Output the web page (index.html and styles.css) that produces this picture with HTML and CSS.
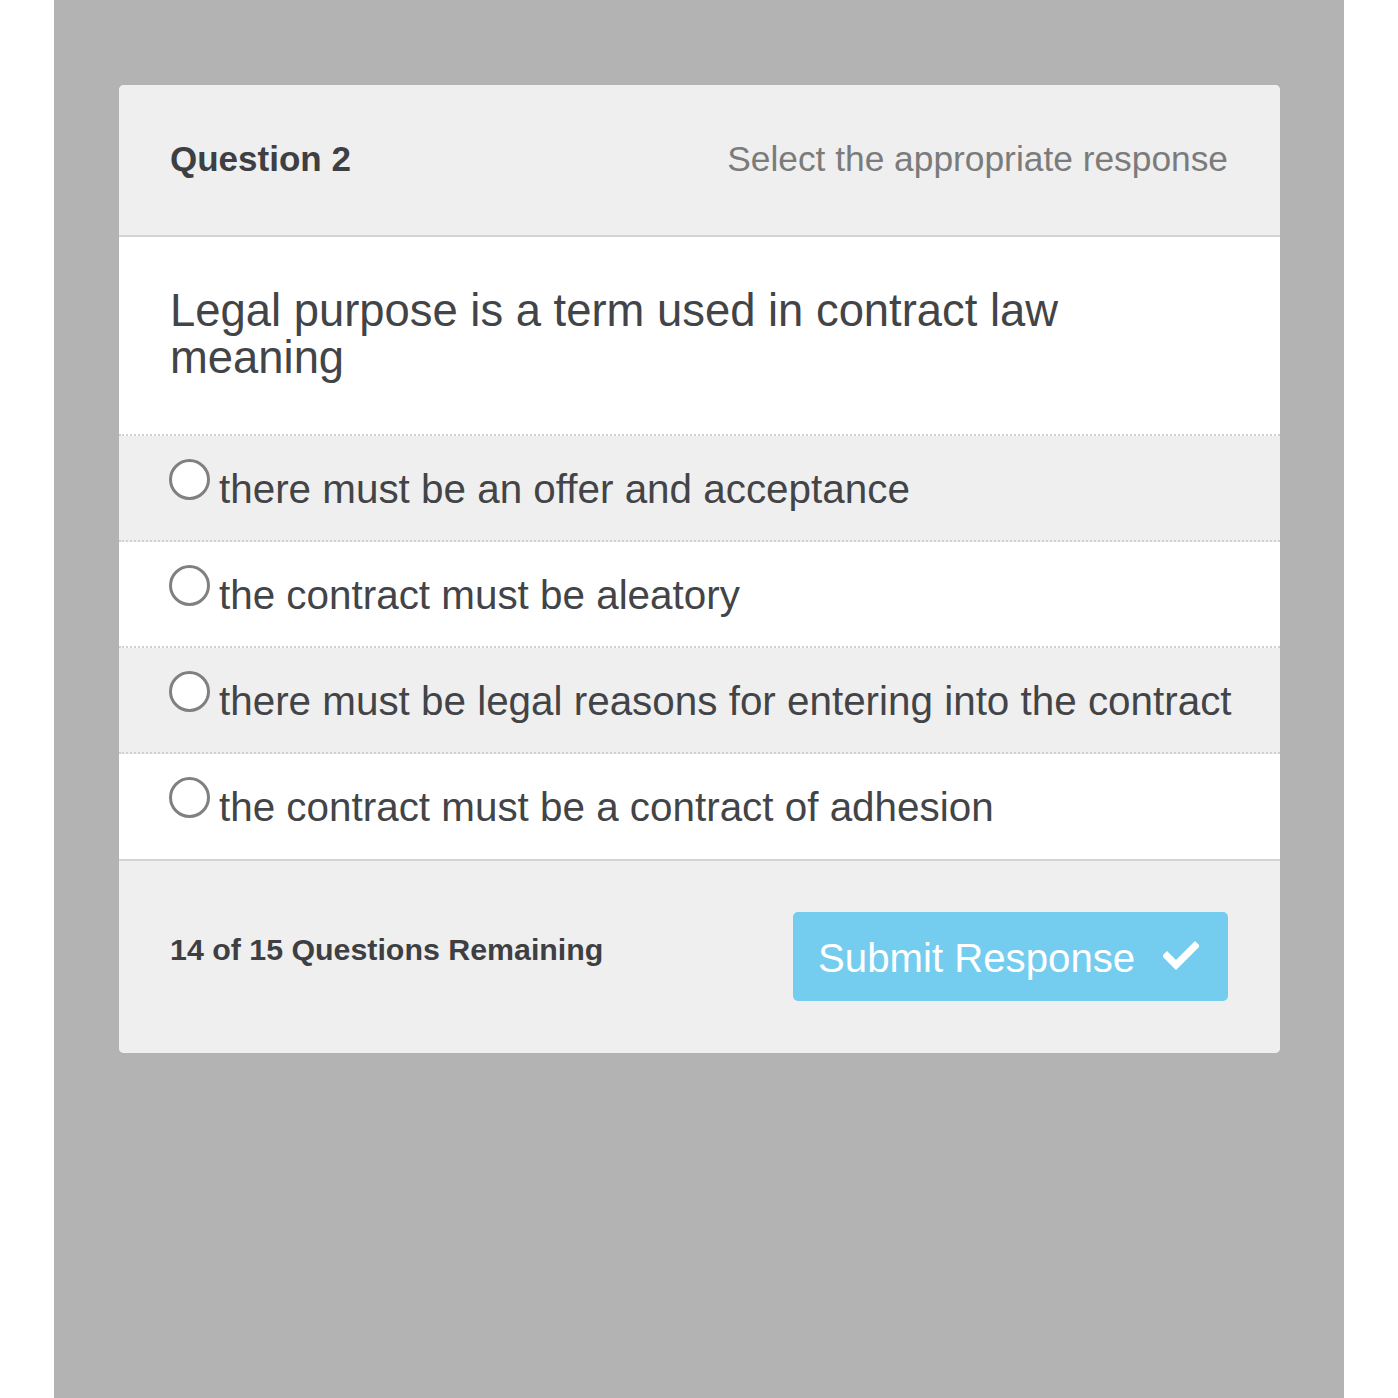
FILE: index.html
```html
<!DOCTYPE html>
<html>
<head>
<meta charset="utf-8">
<link rel="stylesheet" href="styles.css">
</head>
<body>
<div class="panel">
  <div class="card">
    <div class="card-header">
      <div class="q-num">Question 2</div>
      <div class="q-hint">Select the appropriate response</div>
    </div>
    <div class="q-text">Legal purpose is a term used in contract law meaning</div>
    <div class="options">
      <label class="option shaded"><span class="radio"></span><span class="opt-text">there must be an offer and acceptance</span></label>
      <label class="option"><span class="radio"></span><span class="opt-text">the contract must be aleatory</span></label>
      <label class="option shaded"><span class="radio"></span><span class="opt-text">there must be legal reasons for entering into the contract</span></label>
      <label class="option"><span class="radio"></span><span class="opt-text">the contract must be a contract of adhesion</span></label>
    </div>
    <div class="card-footer">
      <div class="remaining">14 of 15 Questions Remaining</div>
      <button class="submit"><span class="submit-label">Submit Response</span>
        <svg class="check" viewBox="0 0 36 30" width="36" height="30"><path d="M4 15 L13 24 L32 5" fill="none" stroke="#fff" stroke-width="7" stroke-linecap="square" stroke-linejoin="miter"/></svg>
      </button>
    </div>
  </div>
</div>
</body>
</html>
```
FILE: styles.css
```css
* { box-sizing: border-box; }
html, body { margin: 0; padding: 0; background: #ffffff; }
body {
  font-family: "Liberation Sans", Arial, Helvetica, sans-serif;
  color: #434447;
}
.panel {
  margin: 0 54px;
  background: #b3b3b3;
  min-height: 1398px;
  padding: 85px 64px 0 65px;
}
.card {
  background: #ffffff;
  border-radius: 5px;
  overflow: hidden;
}
.card-header {
  background: #efefef;
  height: 152px;
  border-bottom: 2px solid #d3d3d3;
  display: flex;
  align-items: center;
  justify-content: space-between;
  padding: 0 52px 2px 51px;
}
.q-num {
  font-weight: bold;
  font-size: 35px;
  color: #3e3f42;
}
.q-hint {
  font-size: 35.35px;
  color: #7b7b7b;
}
.q-text {
  font-size: 45.4px;
  line-height: 47px;
  padding: 50px 51px 55px 51px;
  height: 199px;
  color: #434447;
  border-bottom: 2px dotted #d0d0d0;
}
.options { display: flex; flex-direction: column; }
.option {
  display: flex;
  align-items: center;
  gap: 9px;
  height: 106px;
  padding: 2px 0 0 50px;
  border-bottom: 2px dotted #d0d0d0;
  white-space: nowrap;
}
.option:last-child { border-bottom: 2px solid #d3d3d3; height: 107px; }
.option.shaded { background: #efefef; }
.radio {
  width: 41px;
  height: 41px;
  border: 3px solid #808080;
  border-radius: 50%;
  background: #fff;
  flex: none;
  margin-top: -20px;
}
.opt-text {
  font-size: 40.4px;
  color: #434447;
}
.card-footer {
  background: #efefef;
  height: 192px;
  display: flex;
  align-items: center;
  justify-content: space-between;
  padding: 0 52px 0 51px;
}
.remaining {
  font-weight: bold;
  font-size: 30.35px;
  color: #3e3f42;
  margin-top: -14px;
}
.submit {
  background: #74cdef;
  border: none;
  border-radius: 5px;
  height: 89px;
  width: 435px;
  color: #ffffff;
  font-family: "Liberation Sans", Arial, Helvetica, sans-serif;
  font-size: 40.2px;
  display: flex;
  align-items: center;
  padding: 0 26px 0 25px;
  gap: 28px;
  margin-top: -2px;
}
.submit-label { position: relative; top: 3px; }
.check { flex: none; }
```
